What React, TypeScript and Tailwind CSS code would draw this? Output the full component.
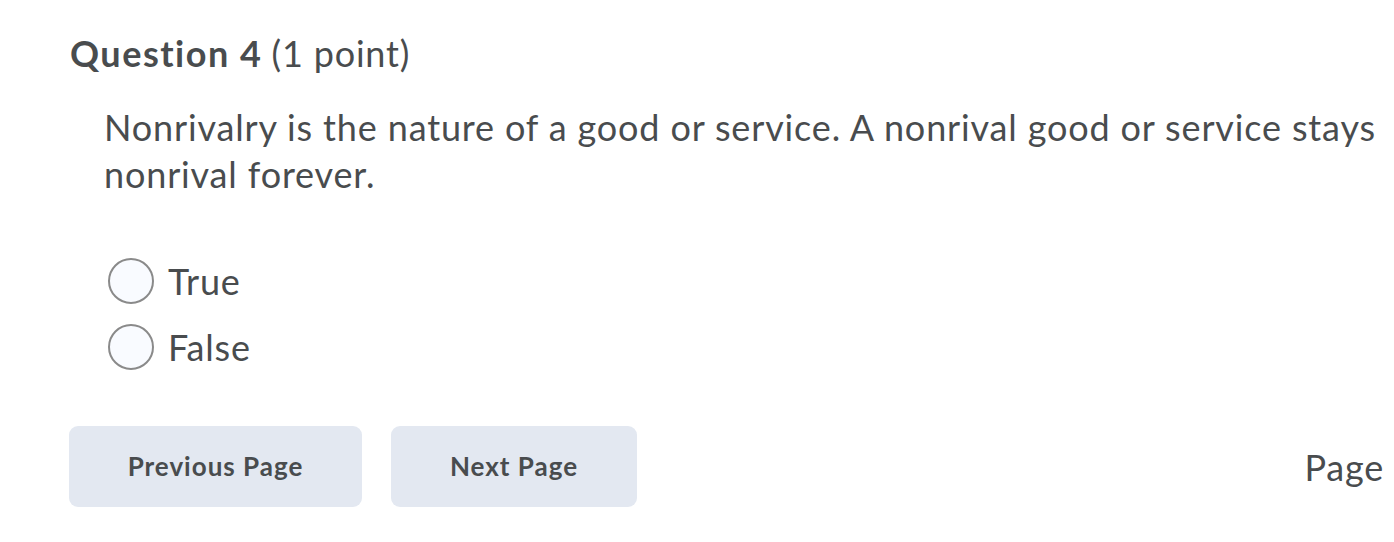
import React from "react";

export default function App() {
  return (
    <div
      className="w-[1394px] h-[542px] overflow-hidden bg-white text-[#494c4e] [font-variant-ligatures:none]"
      style={{ fontFamily: "Lato, 'Open Sans', sans-serif" }}
    >
      <div className="pl-[70px] pt-[29px]">
        <h2 className="text-[36px] leading-[48px] whitespace-nowrap">
          <span className="font-bold tracking-[1.5px]">Question 4</span>{" "}
          <span className="tracking-[0.8px]">(1 point)</span>
        </h2>
        <p className="mt-[27px] ml-[34px] text-[36px] leading-[47px] tracking-[0.85px] w-[1320px]">
          Nonrivalry is the nature of a good or service. A nonrival good or service stays nonrival forever.
        </p>
        <div className="mt-[60px] ml-[38px] flex flex-col gap-[20px]">
          {["True", "False"].map((o) => (
            <label key={o} className="flex items-center gap-[14px] h-[46px]">
              <span className="w-[46px] h-[46px] rounded-full border-2 border-[#8a8a8a] bg-[#f9fbff] shrink-0" />
              <span className="text-[36px] leading-[46px] tracking-[0.8px]">{o}</span>
            </label>
          ))}
        </div>
      </div>
      <div className="mt-[56px] pl-[69px] flex items-center">
        <button className="w-[293px] h-[81px] rounded-[9px] bg-[#e3e8f1] text-[26px] font-bold tracking-[1px] text-[#494c4e]">
          Previous Page
        </button>
        <button className="ml-[29px] w-[246px] h-[81px] rounded-[9px] bg-[#e3e8f1] text-[26px] font-bold tracking-[1px] text-[#494c4e]">
          Next Page
        </button>
        <span className="ml-auto mr-[10px] text-[36px] tracking-[0.8px] whitespace-nowrap">Page</span>
      </div>
    </div>
  );
}
